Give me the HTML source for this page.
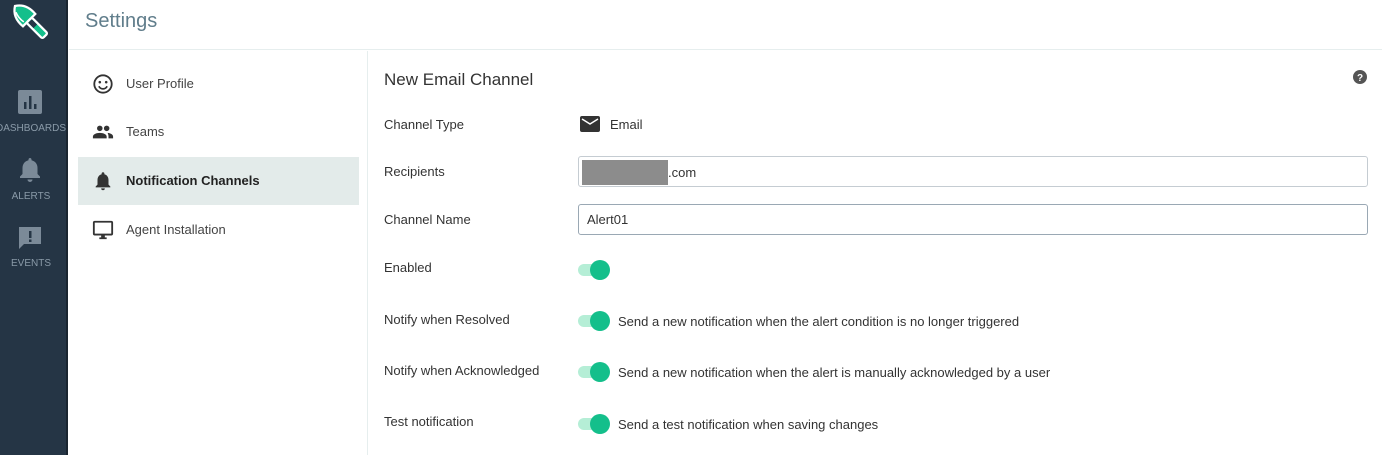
<!DOCTYPE html>
<html><head><style>
*{margin:0;padding:0;box-sizing:border-box}
body{width:1382px;height:455px;overflow:hidden;background:#fff;font-family:"Liberation Sans",sans-serif;color:#333;position:relative}
.side{position:absolute;left:0;top:0;width:68px;height:455px;background:#253545;border-right:2px solid #1a2530}
.side .lbl{position:absolute;width:68px;text-align:center;font-size:10px;color:#8a9aa8;left:-4px}
.hdr{position:absolute;left:69px;top:0;right:0;height:50px;border-bottom:1px solid #e6eeee}
.hdr h1{position:absolute;left:16px;top:10px;font-weight:normal;font-size:20px;color:#607d8b}
.nav{position:absolute;left:69px;top:51px;width:299px;height:404px;border-right:1px solid #e6eeee}
.item{position:absolute;left:9px;width:281px;height:48px;font-size:13px;color:#444}
.item span{position:absolute;left:48px;top:16px}
.item svg{position:absolute;left:14px;top:13px}
.sel{background:#e3ebea}
.sel span{font-weight:bold;color:#222}
.t{position:absolute;font-size:13px;color:#333;white-space:nowrap}
.inp{position:absolute;left:578px;width:790px;height:31px;border:1px solid #c5ccd2;border-radius:3px;font-size:13px;padding:7px 0 0 8px}
.tog{position:absolute;left:578px;width:34px;height:20px}
.tog .tr{position:absolute;left:0;top:4px;width:30px;height:12px;border-radius:6px;background:#b5eed6}
.tog .kn{position:absolute;left:12px;top:0;width:20px;height:20px;border-radius:50%;background:#14bf8b}
</style></head><body>
<div class="side">
<svg style="position:absolute;left:0;top:0" width="68" height="50" viewBox="0 0 68 50"><g transform="translate(30,21) rotate(-45) scale(1.25)"><path d="M0,-17 Q8,-12 7,-1 L-7,-1 Q-8,-12 0,-17 Z" fill="#14bf8b" stroke="#fff" stroke-width="1.8"/><path d="M-3,-13 Q-5,-8 -4,-3" fill="none" stroke="#fff" stroke-width="1.3"/><rect x="-3" y="-1" width="6" height="18" rx="1.5" fill="#14bf8b" stroke="#fff" stroke-width="1.8"/><rect x="-2" y="0" width="4" height="6" fill="#253545"/></g></svg>
<svg style="position:absolute;left:18px;top:90px" width="24" height="24"><rect x="0" y="0" width="24" height="24" rx="2" fill="#7b8a98"/><rect x="6" y="12" width="2.5" height="7" fill="#253545"/><rect x="11" y="6" width="2.5" height="13" fill="#253545"/><rect x="16" y="14" width="2.5" height="5" fill="#253545"/></svg>
<div class="lbl" style="top:123px">DASHBOARDS</div>
<svg style="position:absolute;left:19px;top:157px" width="22" height="26" viewBox="0 0 22 26"><path d="M11 1c-1 0-1.5.8-1.5 1.6v.7C5.5 4.2 3.5 7.5 3.5 11v6L1 19.5V21h20v-1.5L18.5 17v-6c0-3.5-2-6.8-6-7.7v-.7C12.5 1.8 12 1 11 1zM8.5 22.5a2.5 2.5 0 0 0 5 0z" fill="#7b8a98"/></svg>
<div class="lbl" style="top:191px;left:-3px">ALERTS</div>
<svg style="position:absolute;left:17px;top:225px" width="26" height="26" viewBox="0 0 26 26"><path d="M2 2h22v17H7l-5 5z" fill="#7b8a98"/><rect x="12" y="6" width="2.5" height="7" fill="#253545"/><rect x="12" y="14.5" width="2.5" height="2.5" fill="#253545"/></svg>
<div class="lbl" style="top:258px;left:-3px">EVENTS</div>
</div>
<div class="hdr"><h1>Settings</h1></div>
<div class="nav">
<div class="item" style="top:9px"><svg width="22" height="22" viewBox="0 0 24 24"><circle cx="12" cy="12" r="9.5" fill="none" stroke="#333" stroke-width="2"/><circle cx="8.5" cy="10" r="1.4" fill="#333"/><circle cx="15.5" cy="10" r="1.4" fill="#333"/><path d="M7.5 14.5a5 5 0 0 0 9 0" fill="none" stroke="#333" stroke-width="1.8"/></svg><span>User Profile</span></div>
<div class="item" style="top:57px"><svg width="22" height="22" viewBox="0 0 24 24"><circle cx="8.5" cy="8" r="3" fill="#333"/><circle cx="16" cy="8" r="3" fill="#333"/><path d="M1 19v-2c0-2.5 4-4 7.5-4s7.5 1.5 7.5 4v2z" fill="#333"/><path d="M17 13c3 .3 6 1.6 6 4v2h-5v-2c0-1.5-.4-2.8-1-4z" fill="#333"/></svg><span>Teams</span></div>
<div class="item sel" style="top:106px"><svg width="22" height="22" viewBox="0 0 24 24"><path d="M12 22a2 2 0 0 0 2-2h-4a2 2 0 0 0 2 2zm6-6v-5c0-3-1.6-5.6-4.5-6.3V4a1.5 1.5 0 0 0-3 0v.7C7.6 5.4 6 8 6 11v5l-2 2v1h16v-1z" fill="#333"/></svg><span>Notification Channels</span></div>
<div class="item" style="top:155px"><svg width="22" height="22" viewBox="0 0 24 24"><path d="M21 2H3a2 2 0 0 0-2 2v12a2 2 0 0 0 2 2h7v2H8v2h8v-2h-2v-2h7a2 2 0 0 0 2-2V4a2 2 0 0 0-2-2zm0 14H3V4h18z" fill="#333"/></svg><span>Agent Installation</span></div>
</div>
<div class="t" style="left:384px;top:70px;font-size:17px;color:#333">New Email Channel</div>
<svg style="position:absolute;left:1353px;top:70px" width="14" height="14" viewBox="0 0 14 14"><circle cx="7" cy="7" r="7" fill="#555"/><text x="7" y="11" font-size="10" font-weight="bold" fill="#fff" text-anchor="middle" font-family="Liberation Sans">?</text></svg>
<div class="t" style="left:384px;top:117px">Channel Type</div>
<svg style="position:absolute;left:580px;top:116px" width="20" height="16" viewBox="0 0 20 16"><rect width="20" height="16" rx="2" fill="#333"/><path d="M2 3l8 5 8-5" fill="none" stroke="#fff" stroke-width="1.5"/></svg>
<div class="t" style="left:610px;top:117px">Email</div>
<div class="t" style="left:384px;top:164px">Recipients</div>
<div class="inp" style="top:156px"><div style="position:absolute;left:3px;top:3px;width:86px;height:25px;background:#8c8c8c"></div><span style="position:absolute;left:89px;top:8px">.com</span></div>
<div class="t" style="left:384px;top:212px">Channel Name</div>
<div class="inp" style="top:204px;border-color:#9aa8b4">Alert01</div>
<div class="t" style="left:384px;top:260px">Enabled</div>
<div class="tog" style="top:260px"><div class="tr"></div><div class="kn"></div></div>
<div class="t" style="left:384px;top:312px">Notify when Resolved</div>
<div class="tog" style="top:311px"><div class="tr"></div><div class="kn"></div></div>
<div class="t" style="left:618px;top:314px">Send a new notification when the alert condition is no longer triggered</div>
<div class="t" style="left:384px;top:363px">Notify when Acknowledged</div>
<div class="tog" style="top:362px"><div class="tr"></div><div class="kn"></div></div>
<div class="t" style="left:618px;top:365px">Send a new notification when the alert is manually acknowledged by a user</div>
<div class="t" style="left:384px;top:414px">Test notification</div>
<div class="tog" style="top:414px"><div class="tr"></div><div class="kn"></div></div>
<div class="t" style="left:618px;top:417px">Send a test notification when saving changes</div>
</body></html>
